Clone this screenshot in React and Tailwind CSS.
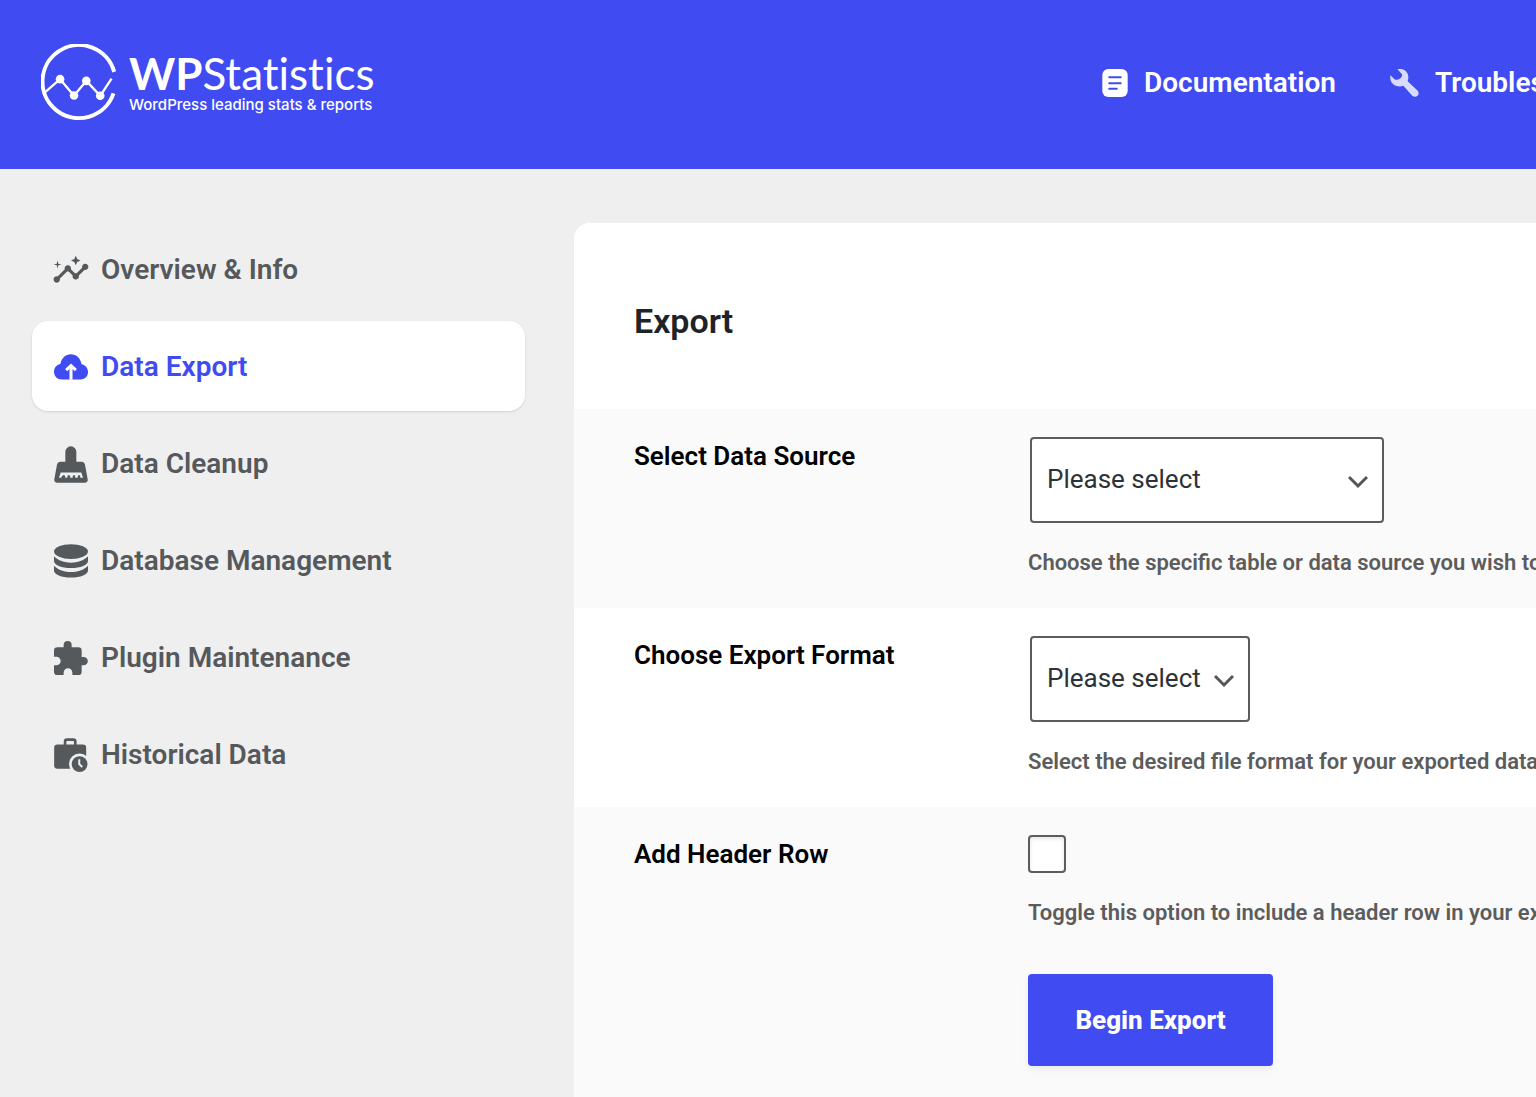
import React, { useState } from 'react';
import { MdInsights } from 'react-icons/md';

const LogoMark = () => (
  <svg viewBox="33 41 228 232" className="h-[77px] w-[76px] shrink-0" fill="none" stroke="#fff" aria-hidden="true">
    <path d="M253 125A110 110 0 1 0 251 190" strokeWidth="12" />
    <path d="M46 185L90 147L132 197L169 152L211 197L245 145" strokeWidth="7" />
    <g fill="#fff" stroke="none">
      <circle cx="90" cy="147" r="13" />
      <circle cx="132" cy="196" r="13" />
      <circle cx="169" cy="152" r="13" />
      <circle cx="211" cy="197" r="13" />
    </g>
  </svg>
);

const DocIcon = () => (
  <svg viewBox="65 55 77 85" className="h-7 w-[26px] shrink-0" aria-hidden="true">
    <rect x="65" y="55" width="77" height="85" rx="18" fill="#fff" />
    <path d="M86 80H121M86 98H121M86 115H109" stroke="#404bf2" strokeWidth="6" strokeLinecap="round" />
  </svg>
);

const WrenchIcon = () => (
  <svg viewBox="933 55 87 85" className="h-7 w-[29px] shrink-0" fill="#d9dbfc" aria-hidden="true">
    <path d="M955 56C963 54 973 55 980 61C989 69 990 82 986 92L1016 120C1026 132 1012 146 1000 136L973 106C962 110 949 108 941 100C934 93 932 83 934 74L947 87C956 90 971 82 969 71Z" />
  </svg>
);

const OverviewIcon = () => <MdInsights className="h-[38px] w-[38px] shrink-0" />;

const CloudIcon = () => (
  <svg viewBox="73 342 101 76" className="h-[26px] w-[34px]" aria-hidden="true">
    <path
      fill="currentColor"
      d="M96 417C82 417 73 407 73 394C73 382 81 373 92 371C95 354 107 342 123 342C140 342 152 354 155 372C166 374 174 383 174 395C174 408 165 417 152 417Z"
    />
    <path d="M123.500 418V378M109 389L123.500 376L138 389" fill="none" stroke="#fff" strokeWidth="9" />
  </svg>
);

const BrushIcon = () => (
  <svg viewBox="73 44 102 110" className="h-[37px] w-[34px]" aria-hidden="true">
    <g fill="currentColor">
      <path d="M107 96V61a16.500 16.500 0 0 1 33 0V96Z" />
      <path d="M92 91H156a10 10 0 0 1 10 8L174 143a9 9 0 0 1-9 11H83a9 9 0 0 1-9-11L82 99a10 10 0 0 1 10-8Z" />
    </g>
    <path
      d="M93 123H155L160 139H152C152 132 150 130 147 131C144 132 144 135 144 139H137C137 132 135 130 132 131C129 132 129 135 129 139H122C122 133 119 130 116 131C113 132 113 135 113 139H107C107 133 104 130 101 131C97 133 96 135 95 139H88Z"
      fill="#efefef"
    />
  </svg>
);

const DatabaseIcon = () => (
  <svg viewBox="73 344 101 100" className="h-[34px] w-[34px]" fill="currentColor" aria-hidden="true">
    <ellipse cx="123.500" cy="366" rx="50.500" ry="22" />
    <path d="M73 380C85 393 105 399 123.500 399S162 393 174 380V394C174 406 152 415 123.500 415S73 406 73 394Z" />
    <path d="M73 408C85 421 105 427 123.500 427S162 421 174 408V422C174 434 152 443 123.500 443S73 434 73 422Z" />
  </svg>
);

const PuzzleIcon = () => (
  <svg viewBox="73 61 102 102" className="h-[34px] w-[34px]" fill="currentColor" aria-hidden="true">
    <path d="M83 80H102V73a12 12 0 0 1 24 0V80H146a10 10 0 0 1 10 10V109H162a12 12 0 0 1 0 25H156V153a10 10 0 0 1-10 10H128V156a13 13 0 0 0-26 0V163H83a10 10 0 0 1-10-10V134H80a13 13 0 0 0 0-26H73V90a10 10 0 0 1 10-10Z" />
  </svg>
);

const HistoryIcon = () => (
  <svg viewBox="73 350 102 103" className="h-[34px] w-[34px]" aria-hidden="true">
    <rect x="106" y="355" width="31" height="24" rx="6" fill="none" stroke="currentColor" strokeWidth="8" />
    <rect x="73" y="370" width="97" height="73" rx="10" fill="currentColor" />
    <circle cx="150" cy="429" r="32" fill="#efefef" />
    <circle cx="150" cy="429" r="24" fill="currentColor" />
    <path d="M149 414V429L158 438" fill="none" stroke="#efefef" strokeWidth="6" />
  </svg>
);

const menu = [
  { label: 'Overview & Info', Icon: OverviewIcon },
  { label: 'Data Export', Icon: CloudIcon, active: true },
  { label: 'Data Cleanup', Icon: BrushIcon },
  { label: 'Database Management', Icon: DatabaseIcon },
  { label: 'Plugin Maintenance', Icon: PuzzleIcon },
  { label: 'Historical Data', Icon: HistoryIcon },
];

function Header() {
  return (
    <header className="flex h-[169px] items-center overflow-hidden bg-[#404bf2] pb-1 pl-[41px] text-white">
      <a href="#home" className="flex shrink-0 items-center gap-3">
        <LogoMark />
        <span className="flex flex-col">
          <span className="font-[Lato,sans-serif] text-[44px] leading-[44px] whitespace-nowrap [font-variant-ligatures:none]">
            <b className="font-bold">WP</b>
            <span className="font-normal">Statistics</span>
          </span>
          <span className="font-[Inter,sans-serif] text-[15px] leading-5 font-medium whitespace-nowrap">
            WordPress leading stats &amp; reports
          </span>
        </span>
      </a>
      <nav className="ml-auto flex w-[434px] shrink-0 gap-[54px] overflow-hidden text-[28px] leading-9 font-semibold whitespace-nowrap">
        <a href="#documentation" className="flex shrink-0 items-center gap-4">
          <DocIcon />
          Documentation
        </a>
        <a href="#troubleshooting" className="flex shrink-0 items-center gap-4">
          <WrenchIcon />
          Troubleshooting
        </a>
      </nav>
    </header>
  );
}

function Sidebar() {
  return (
    <aside className="w-[574px] shrink-0 pt-[55px] pr-[49px] pl-8">
      <nav className="flex flex-col gap-[7px]">
        {menu.map(({ label, Icon, active }) => (
          <a
            key={label}
            href="#tab"
            className={
              active
                ? 'flex h-[90px] items-center gap-[13px] rounded-2xl bg-white pt-0.5 pl-[22px] text-[28px] leading-9 font-semibold text-[#404bf2] shadow-sm'
                : 'flex h-[90px] items-center gap-[13px] rounded-2xl pt-0.5 pl-[22px] text-[28px] leading-9 font-semibold text-[#56595c]'
            }
          >
            <span className="flex w-[34px] shrink-0 justify-center">
              <Icon />
            </span>
            {label}
          </a>
        ))}
      </nav>
    </aside>
  );
}

function Row({ id, label, help, shaded, children }) {
  return (
    <div className={shaded ? 'flex bg-[#fafafa] py-7 pl-[60px]' : 'flex bg-white py-7 pl-[60px]'}>
      <label htmlFor={id} className="w-[394px] shrink-0 text-[26px] leading-[38px] font-semibold text-black">
        {label}
      </label>
      <div className="min-w-0 flex-1">
        {children}
        <p className="mt-[23px] overflow-hidden text-[22px] leading-[34px] font-semibold whitespace-nowrap text-[#5c5c5c]">
          {help}
        </p>
      </div>
    </div>
  );
}

function SelectBox({ id, options, wide }) {
  return (
    <div className={wide ? 'relative ml-0.5 w-[354px]' : 'relative ml-0.5 w-[220px]'}>
      <select
        id={id}
        className="block h-[86px] w-full appearance-none rounded border-2 border-[#5c5c5c] bg-white px-[15px] pb-0.5 text-[26px] text-[#2c3338]"
      >
        <option>Please select</option>
        {options.map((o) => (
          <option key={o}>{o}</option>
        ))}
      </select>
      <svg
        viewBox="0 0 20 14"
        className="pointer-events-none absolute top-[38px] right-4 h-[14px] w-5"
        fill="none"
        stroke="#555"
        strokeWidth="3"
        aria-hidden="true"
      >
        <path d="M1 2L10 11L19 2" />
      </svg>
    </div>
  );
}

export default function App() {
  const [headerRow, setHeaderRow] = useState(false);

  return (
    <div className="flex min-h-screen flex-col overflow-hidden bg-[#efefef] font-[Roboto,sans-serif]">
      <Header />
      <div className="flex flex-1">
        <Sidebar />
        <main className="mt-[54px] flex min-w-0 flex-1 flex-col overflow-hidden rounded-tl-2xl bg-[#fafafa]">
          <h1 className="flex h-[186px] items-center bg-white pt-2.5 pl-[60px] text-[34px] leading-10 font-semibold text-[#1d2327]">
            Export
          </h1>
          <form onSubmit={(e) => e.preventDefault()}>
            <Row id="source" label="Select Data Source" help="Choose the specific table or data source you wish to export." shaded>
              <SelectBox id="source" options={['All tables', 'Visitors', 'Pages']} wide />
            </Row>
            <Row id="format" label="Choose Export Format" help="Select the desired file format for your exported data.">
              <SelectBox id="format" options={['XML', 'CSV', 'TSV']} />
            </Row>
            <Row id="header-row" label="Add Header Row" help="Toggle this option to include a header row in your exported file." shaded>
              <input
                id="header-row"
                type="checkbox"
                checked={headerRow}
                onChange={(e) => setHeaderRow(e.target.checked)}
                className="block h-[38px] w-[38px] appearance-none rounded border-2 border-[#5c5c5c] bg-white shadow-[inset_0_2px_4px_rgba(0,0,0,0.1)] checked:bg-[#404bf2]"
              />
            </Row>
            <div className="pt-4 pb-7 pl-[454px]">
              <button
                type="submit"
                className="h-[92px] w-[245px] rounded bg-[#404bf2] text-[26px] font-extrabold text-white shadow-[0_4px_8px_rgba(0,0,0,0.05)]"
              >
                Begin Export
              </button>
            </div>
          </form>
        </main>
      </div>
    </div>
  );
}
